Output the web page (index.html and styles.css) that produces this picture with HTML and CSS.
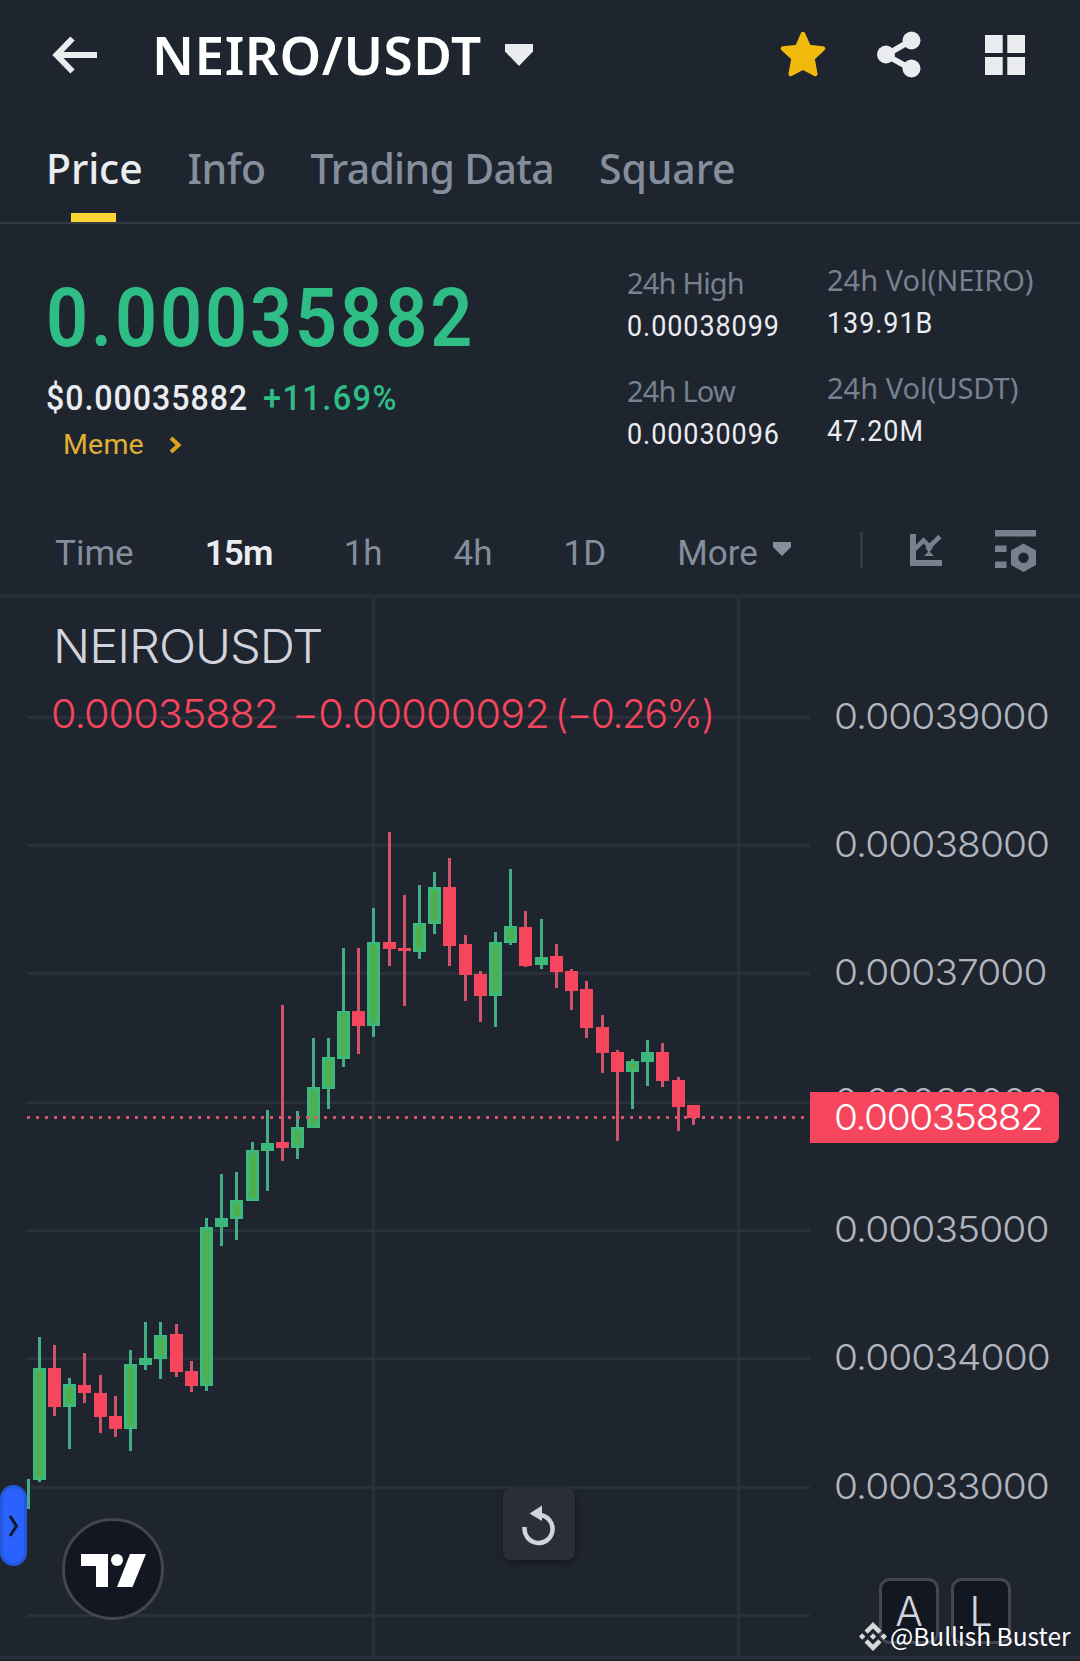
FILE: index.html
```
<!DOCTYPE html>
<html lang="en">
<head>
<meta charset="utf-8">
<title>NEIRO/USDT</title>
<link rel="stylesheet" href="styles.css">
</head>
<body>
<div class="app">
  <header class="header">
    <svg class="icon-back" width="46" height="38" viewBox="0 0 46 38" fill="none" stroke="#eaecef" stroke-width="6"><path d="M45 19H5M20.5 2.5L4.5 19l16 16.500"/></svg>
    <h1 class="pair">NEIRO/USDT</h1>
    <svg class="icon-caret" width="28" height="22" viewBox="0 0 28 22" fill="#eaecef"><path d="M0 0h28v7.500L14 22 0 7.500z"/></svg>
    <div class="actions">
      <svg width="46" height="47" viewBox="0 0 46 47"><path d="M23 3l5.700 12.900 14.300 1.600-10.600 9.800 2.900 15.700L23 36.400 10.700 43l2.900-15.700L3 17.500l14.300-1.600z" fill="#f0b90b" stroke="#f0b90b" stroke-width="4.500" stroke-linejoin="round"/></svg>
      <svg width="44" height="47" viewBox="0 0 44 47" fill="#eaecef"><path d="M9 24L34 9.500M9 24l25 14" stroke="#eaecef" stroke-width="6"/><circle cx="9" cy="23.500" r="9"/><circle cx="34.500" cy="9.500" r="9"/><circle cx="34.500" cy="37.500" r="9"/></svg>
      <svg width="40" height="40" viewBox="0 0 40 40" fill="#eaecef"><path d="M0 0h17.700v18H0zM22.300 0H40v18H22.300zM0 22h17.700v18H0zM22.300 22H40v18H22.300z"/></svg>
    </div>
  </header>

  <nav class="tabs">
    <span class="tab tab-active">Price</span>
    <span class="tab tab-info">Info</span>
    <span class="tab tab-data">Trading Data</span>
    <span class="tab">Square</span>
  </nav>

  <section class="summary">
    <div class="quote">
      <div class="last-price">0.00035882</div>
      <div class="sub-price"><span class="fiat">$0.00035882</span><span class="change">+11.69%</span></div>
      <div class="category">Meme
        <svg width="13" height="18" viewBox="0 0 13 18" fill="none" stroke="#d9a520" stroke-width="4"><path d="M2 2l7.500 7L2 16"/></svg>
      </div>
    </div>
    <dl class="stats stats-price">
      <dt class="tight">24h High</dt><dd>0.00038099</dd>
      <dt class="tight">24h Low</dt><dd>0.00030096</dd>
    </dl>
    <dl class="stats stats-volume">
      <dt>24h Vol(NEIRO)</dt><dd>139.91B</dd>
      <dt>24h Vol(USDT)</dt><dd>47.20M</dd>
    </dl>
  </section>

  <div class="intervals">
    <span>Time</span>
    <span class="interval-active">15m</span>
    <span>1h</span>
    <span>4h</span>
    <span>1D</span>
    <span class="more">More <svg width="18" height="14" viewBox="0 0 18 14" fill="#848e9c"><path d="M0 0h18v5L9 14 0 5z"/></svg></span>
    <i class="divider"></i>
    <svg class="icon-chart" width="33" height="33" viewBox="0 0 33 33" fill="#76808f"><path d="M0 0h6v26h26v6H0z"/><path d="M5 15l8.500-8.500 6 6L30 2.500" fill="none" stroke="#76808f" stroke-width="4.500"/><path d="M14 22l5-5 5 5z M15 13h8l-4 6z"/></svg>
    <svg class="icon-settings" width="42" height="43" viewBox="0 0 42 43" fill="#76808f"><path d="M0 1h41v6.500H0zM0 16.500h11.500V23H0zM0 32.500h11.500V39H0z"/><path fill-rule="evenodd" d="M28.500 14.500L41 21.500v14.500l-12.500 7-12.500-7V21.500zM28.500 23.500a5.200 5.200 0 1 0 0 10.400 5.200 5.200 0 1 0 0-10.400z"/></svg>
  </div>

  <main class="chart">
    <svg class="plot" id="plot" width="1080" height="1063" viewBox="0 598 1080 1063"></svg>

    <div class="legend">
      <div class="symbol">NEIROUSDT</div>
      <div class="ohlc"><span class="close">0.00035882</span><span class="delta">−0.00000092</span><span class="percent">(−0.26%)</span></div>
    </div>

    <div class="drawer-handle"><svg width="12" height="22" viewBox="0 0 12 22" fill="none" stroke="#131722" stroke-width="3"><path d="M2 1l6.500 10L2 21"/></svg></div>

    <div class="tv-badge"><svg width="65" height="34" viewBox="0 0 65 34" fill="#fff"><path d="M0 0h27v33H15V12H0zM49 0h16L51.500 33H36z"/><circle cx="36" cy="6" r="6"/></svg></div>

    <div class="reset"><svg width="36" height="42" viewBox="0 0 36 42"><path d="M4.700 22a14 14 0 1 0 15.500-11.900" fill="none" stroke="#d1d4dc" stroke-width="4.500"/><path d="M9.500 8.500L22 .5v15.500z" fill="#d1d4dc"/></svg></div>

    <div class="scale-modes"><span>A</span><span>L</span></div>

    <div class="watermark">
      <svg width="28" height="29" viewBox="0 0 28 29" fill="#d9d9d9"><path d="M14 0l8.500 8.500-3.200 3.200L14 6.400 8.700 11.700 5.500 8.500zM14 29l8.500-8.500-3.200-3.200L14 22.600l-5.300-5.300-3.200 3.200zM14 11.300l3.200 3.200-3.200 3.200-3.200-3.200zM3.200 11.300l3.200 3.200-3.200 3.200L0 14.500zM24.800 11.300l3.200 3.200-3.200 3.200-3.200-3.200z"/></svg>
      <span>@Bullish Buster</span>
    </div>
  </main>
</div>
<script src="chart.js"></script>
</body>
</html>
```
FILE: chart.js
```
// x, direction, high, body top, body bottom, low (canvas pixels)
const candles = [
  [33,'g',1337,1368,1480,1482],[48,'r',1345,1368,1407,1416],[63,'g',1378,1384,1407,1449],
  [78,'r',1353,1385,1393,1403],[94,'r',1375,1393,1417,1433],[109,'r',1396,1416,1429,1437],
  [124,'g',1350,1364,1429,1451],[139,'g',1322,1358,1365,1370],[154,'g',1322,1335,1359,1379],
  [170,'r',1324,1334,1372,1377],[185,'r',1361,1371,1386,1392],[200,'g',1218,1227,1386,1391],
  [215,'g',1174,1218,1227,1246],[230,'g',1172,1200,1219,1240],[246,'g',1142,1150,1201,1201],
  [261,'g',1110,1143,1151,1191],[276,'r',1005,1142,1148,1161],[291,'g',1111,1127,1148,1159],
  [307,'g',1038,1087,1128,1128],[322,'g',1038,1057,1089,1109],[337,'g',948,1011,1059,1067],
  [352,'r',948,1011,1026,1054],[367,'g',908,942,1026,1037],[383,'r',832,942,949,966],
  [398,'r',895,948,951,1006],[413,'g',885,923,952,959],[428,'g',872,887,924,934],
  [443,'r',858,887,946,966],[459,'r',935,944,975,1001],[474,'r',971,974,996,1022],
  [489,'g',932,942,996,1027],[504,'g',869,926,943,945],[519,'r',911,927,966,967],
  [535,'g',919,957,965,969],[550,'r',944,956,972,988],[565,'r',969,971,991,1010],
  [580,'r',981,989,1028,1038],[596,'r',1015,1027,1053,1073],[611,'r',1050,1052,1072,1141],
  [626,'g',1059,1061,1072,1109],[641,'g',1040,1052,1062,1086],[656,'r',1043,1052,1081,1087],
  [672,'r',1077,1080,1107,1131],[687,'r',1105,1105,1118,1125]
];
const levels = [
  [717,'0.00039000'],[845,'0.00038000'],[973,'0.00037000'],[1102,'0.00036000'],
  [1230,'0.00035000'],[1358,'0.00034000'],[1487,'0.00033000'],[1615,'']
];
const box = (cls, x, y, w, h) => `<rect class="${cls}" x="${x}" y="${y}" width="${w}" height="${h}"/>`;
const label = (cls, y, text) => `<text class="${cls}" transform="translate(834 ${y}) scale(1.08 1)">${text}</text>`;
let out = '';
for (const [y, text] of levels) {
  out += box('grid', 27, y - 1, 783, 3);
  if (text) out += label('axis', y + 11.5, text);
}
out += box('grid', 372, 598, 3, 1058) + box('grid', 737, 598, 3, 1058) + box('grid', 0, 1656, 1080, 3);
out += box('wick-g', 27, 1479, 3, 30);
for (const [x, d, high, top, bottom, low] of candles) {
  out += box('wick-' + d, x + 5, high, 3, low - high) + box('body-' + d, x, top, 13, bottom - top);
  if (d === 'g' && bottom - top > 10) out += box('core-g', x + 3, top + 3, 7, bottom - top - 6);
}
out += '<path class="price-line" d="M27 1117.500H809"/>';
out += '<path class="price-tag" d="M810 1092h243a6 6 0 0 1 6 6v39a6 6 0 0 1-6 6H810z"/>';
out += label('axis tag-text', 1129.5, '0.00035882');
document.getElementById('plot').innerHTML = out;
```
FILE: styles.css
```
* { box-sizing: border-box; }
body { margin: 0; background: #1f252f; color: #eaecef; font-family: Roboto, sans-serif; }
.app { width: 1080px; height: 1661px; overflow: hidden; }
svg { display: block; flex: none; }

.header { display: flex; align-items: center; height: 109px; padding: 0 55px 0 52px; }
.pair { margin: 0 0 0 54px; font: 600 53px/70px "Noto Sans", sans-serif; letter-spacing: .54px; color: #fff; white-space: nowrap; }
.icon-caret { margin-left: 23px; }
.actions { display: flex; align-items: center; margin-left: auto; }
.actions svg + svg { margin-left: 51px; }
.actions svg:last-child { margin-left: 64px; }

.tabs { display: flex; gap: 45px; height: 115px; padding: 34px 0 0 46px; border-bottom: 2px solid #343a45; font: 500 41px/50px "Noto Sans", sans-serif; color: #848e9c; white-space: nowrap; }
.tab { position: relative; letter-spacing: -.1px; }
.tab-active { color: #eaecef; }
.tab-info { letter-spacing: -.5px; }
.tab-data { letter-spacing: -.7px; }
.tab-active::after { content: ""; position: absolute; left: 25px; bottom: 0; width: 45px; height: 9px; background: #fcd535; }

.summary { display: flex; height: 286px; }
.quote { width: 627px; padding: 54px 0 0 46px; }
.last-price { font-weight: 600; font-size: 82px; line-height: 80px; letter-spacing: 3.2px; color: #2ebd85; transform: scaleX(.9); transform-origin: left; }
.sub-price { display: flex; margin-top: 23px; font-weight: 500; font-size: 35px; line-height: 36px; }
.fiat { margin-right: -2.5px; letter-spacing: 1px; transform: scaleX(.92); transform-origin: left; }
.change { letter-spacing: 1.5px; color: #2ebd85; transform: scaleX(.93); transform-origin: left; }
.category { display: flex; align-items: center; gap: 25px; margin: 11px 0 0 17px; font-size: 28.5px; line-height: 34px; letter-spacing: .2px; color: #e0b030; }
.stats { margin: 0; font-size: 29px; line-height: 36px; white-space: nowrap; }
.stats-price { width: 200px; padding-top: 41px; }
.stats-volume { padding-top: 38px; }
.stats dt { font-family: "Noto Sans", sans-serif; color: #76808f; }
.stats .tight { letter-spacing: -.8px; }
.stats dd { margin: 7px 0 29px; letter-spacing: 1px; transform: scaleX(.93); transform-origin: left; }

.intervals { display: flex; align-items: center; gap: 71px; height: 88px; padding-left: 55px; border-bottom: 4px solid #262d38; font-size: 35px; line-height: 40px; color: #848e9c; }
.intervals > span { padding-top: 3px; }
.interval-active { font-weight: 600; letter-spacing: -.8px; color: #eaecef; }
.more { display: flex; align-items: center; gap: 15px; }
.more svg { margin-top: -9px; }
.divider { width: 3px; height: 36px; margin: -4px 0 0 -2px; background: #333a46; }
.icon-chart { margin: -4px 0 0 -24px; }
.icon-settings { margin: -4px 0 0 -19px; }

.chart { position: relative; height: 1063px; font-family: Inter, sans-serif; }
.grid { fill: #2a303a; }
.axis { font: 300 36px Inter, sans-serif; letter-spacing: -.85px; fill: #b2b5be; }
.tag-text { letter-spacing: -1.35px; fill: #fff; }
.price-tag { fill: #f6465d; }
.price-line { fill: none; stroke: #d9566a; stroke-width: 3; stroke-dasharray: 3 6; }
.wick-g { fill: #43ae86; }
.wick-r { fill: #d2546b; }
.body-g { fill: #3cb87c; }
.core-g { fill: #4caf50; }
.body-r { fill: #f6465d; }

.legend { position: absolute; left: 51px; top: 20px; font-weight: 300; white-space: nowrap; }
.symbol { padding-left: 2px; font-size: 47px; line-height: 56px; letter-spacing: -1px; color: #d1d4dc; transform: scaleX(1.04); transform-origin: left; }
.ohlc { display: flex; margin-top: 18px; font-size: 39px; line-height: 44px; color: #f6465d; }
.close { letter-spacing: -.95px; transform: scaleX(1.06); transform-origin: left; }
.delta { margin-left: 27px; letter-spacing: -.73px; transform: scaleX(1.06); transform-origin: left; }
.percent { margin-left: 20px; letter-spacing: -1.5px; }

.drawer-handle { position: absolute; left: 0; top: 887px; width: 27px; height: 81px; display: flex; align-items: center; padding-left: 5px; border: 3px solid #2457dc; border-radius: 14px; background: #2962ff; }
.tv-badge { position: absolute; left: 62px; top: 920px; width: 102px; height: 102px; display: flex; padding: 33px 0 0 16px; border: 3px solid #434651; border-radius: 50%; background: #131722; }
.reset { position: absolute; left: 503px; top: 890px; width: 72px; height: 72px; display: flex; padding: 17px 0 0 17px; border-radius: 8px; background: #2a2e39; box-shadow: 0 3px 7px rgba(0, 0, 0, .35); }
.scale-modes { position: absolute; left: 879px; top: 980px; display: flex; gap: 12px; }
.scale-modes span { width: 60px; height: 66px; border: 3px solid #434651; border-radius: 11px; background: #131722; font-weight: 300; font-size: 41px; line-height: 61px; text-align: center; color: #d1d4dc; }
.watermark { position: absolute; left: 859px; top: 1018px; display: flex; align-items: center; gap: 3px; font: 400 24.5px/40px "Noto Sans CJK SC", sans-serif; color: #fff; white-space: nowrap; }
```
